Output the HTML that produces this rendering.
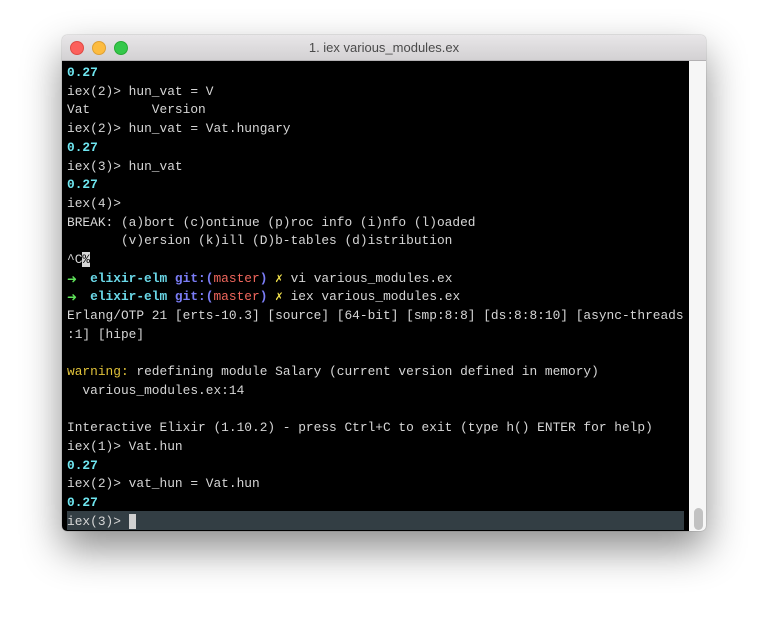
<!DOCTYPE html>
<html><head><style>
body{margin:0;width:768px;height:621px;background:#fff;position:relative;overflow:hidden}
.win{position:absolute;left:62px;top:35px;width:644px;height:496px;border-radius:5px;box-shadow:0 18px 40px rgba(0,0,0,.45),0 0 1px rgba(0,0,0,.5);background:#f6f6f6;overflow:hidden}
.tb{height:25px;background:linear-gradient(#e8e6e8,#d3d1d3);border-bottom:1px solid #b3b1b3;position:relative;font:13px "Liberation Sans",sans-serif;color:#4a4a4a;text-align:center;line-height:25px}
.dot{position:absolute;top:6px;width:12px;height:12px;border-radius:50%}
.term{position:absolute;left:0;top:26px;width:627px;height:470px;background:#000}
.txt{position:absolute;left:5px;top:3px;font:12.85px/18.7px "Liberation Mono",monospace;color:#d6d6d6;white-space:pre}
.c{color:#6fe6f0;font-weight:bold}
.g{color:#5fe35a;font-weight:bold;font-family:"DejaVu Sans",sans-serif;font-size:12px;display:inline-block;width:7.7px;height:18.7px;line-height:18.7px;vertical-align:top;overflow:visible}
.b{color:#6ad8e8;font-weight:bold}
.p{color:#7a7cf5;font-weight:bold}
.r{color:#f0665c}
.y{color:#f1e04b}
.o{color:#e0c23a}
.bar{position:absolute;left:5px;top:450px;width:617px;height:19px;background:#333e44}
.sb{position:absolute;left:632px;top:473px;width:9px;height:22px;border-radius:5px;background:#c2c2c2}
</style></head><body>
<div class="win">
<div class="tb">1. iex various_modules.ex
<div class="dot" style="left:8px;background:#fc605c;border:0.5px solid #de4a44"></div>
<div class="dot" style="left:30px;background:#fdbc40;border:0.5px solid #dea034"></div>
<div class="dot" style="left:52px;background:#34c84a;border:0.5px solid #27aa35"></div>
</div>
<div class="term">
<div class="bar"></div>
<div class="txt"><span class="c">0.27</span>
iex(2)&gt; hun_vat = V
Vat        Version
iex(2)&gt; hun_vat = Vat.hungary
<span class="c">0.27</span>
iex(3)&gt; hun_vat
<span class="c">0.27</span>
iex(4)&gt;
BREAK: (a)bort (c)ontinue (p)roc info (i)nfo (l)oaded
       (v)ersion (k)ill (D)b-tables (d)istribution
^C<span style="background:#d6d6d6;color:#000">%</span>
<span class="g">➜</span>  <span class="b">elixir-elm</span> <span class="p">git:(</span><span class="r">master</span><span class="p">)</span> <span class="y">✗</span> vi various_modules.ex
<span class="g">➜</span>  <span class="b">elixir-elm</span> <span class="p">git:(</span><span class="r">master</span><span class="p">)</span> <span class="y">✗</span> iex various_modules.ex
Erlang/OTP 21 [erts-10.3] [source] [64-bit] [smp:8:8] [ds:8:8:10] [async-threads
:1] [hipe]

<span class="o">warning:</span> redefining module Salary (current version defined in memory)
  various_modules.ex:14

Interactive Elixir (1.10.2) - press Ctrl+C to exit (type h() ENTER for help)
iex(1)&gt; Vat.hun
<span class="c">0.27</span>
iex(2)&gt; vat_hun = Vat.hun
<span class="c">0.27</span>
iex(3)&gt; <span style="background:#d0d0d0"> </span></div>
</div>
<div class="sb"></div>
</div>
</body></html>
